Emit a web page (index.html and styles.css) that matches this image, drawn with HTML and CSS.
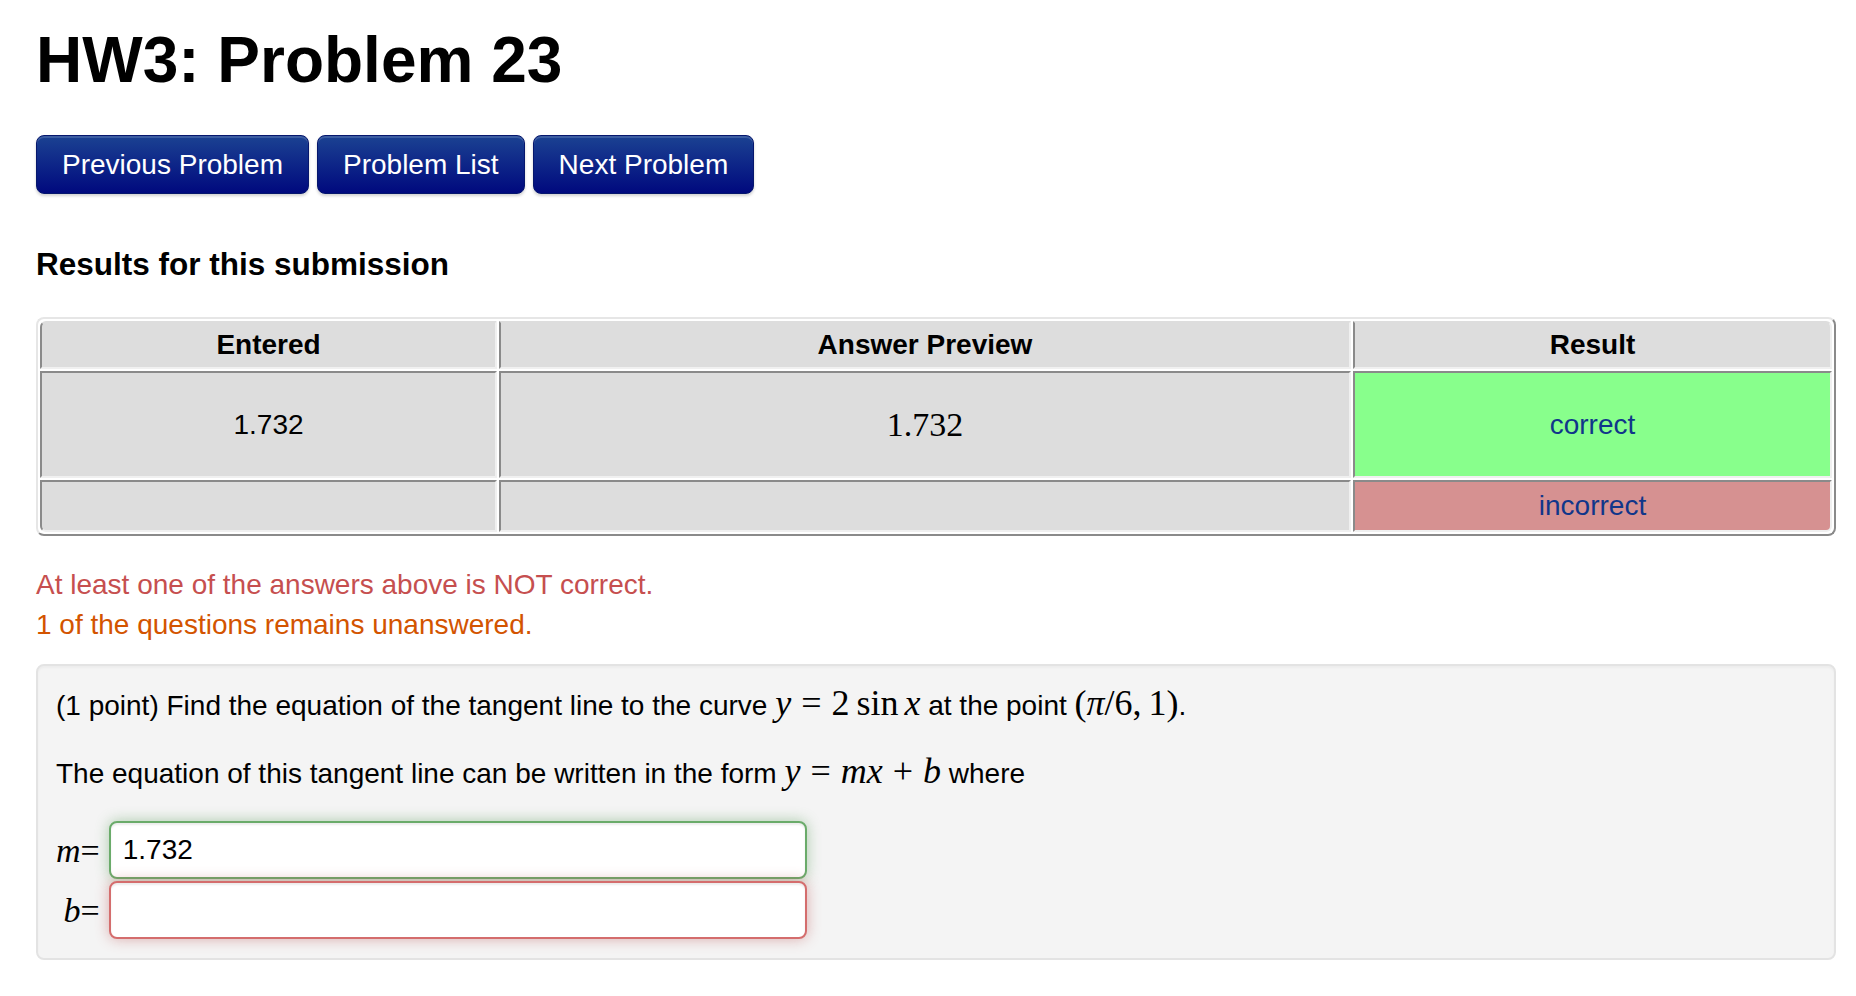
FILE: index.html
```html
<!DOCTYPE html>
<html lang="en">
<head>
<meta charset="utf-8">
<title>HW3: Problem 23</title>
<link rel="stylesheet" href="styles.css">
</head>
<body>
<div class="page">
  <h1 class="title">HW3: Problem 23</h1>
  <nav class="nav">
    <a class="btn" href="#">Previous Problem</a>
    <a class="btn" href="#">Problem List</a>
    <a class="btn" href="#">Next Problem</a>
  </nav>
  <h2 class="subtitle">Results for this submission</h2>
  <table class="results">
    <colgroup><col class="c1"><col class="c2"><col class="c3"></colgroup>
    <tr class="head"><th>Entered</th><th>Answer Preview</th><th>Result</th></tr>
    <tr class="r1"><td>1.732</td><td class="preview">1.732</td><td class="ok">correct</td></tr>
    <tr class="r2"><td></td><td></td><td class="bad">incorrect</td></tr>
  </table>
  <div class="summary">
    <div class="msg-err">At least one of the answers above is NOT correct.</div>
    <div class="msg-warn">1 of the questions remains unanswered.</div>
  </div>
  <div class="problem">
    <p>(1 point) Find the equation of the tangent line to the curve <span class="math"><i>y</i><span class="op">=</span>2<span class="fn">sin</span><i>x</i></span> at the point <span class="math">(<i>π</i>/6,<span class="thin"></span>1)</span>.</p>
    <p>The equation of this tangent line can be written in the form <span class="math"><i>y</i><span class="op">=</span><i>mx</i><span class="op">+</span><i>b</i></span> where</p>
    <div class="answers">
      <label class="lbl" for="m"><span class="math"><i>m</i>=</span></label>
      <input class="ans good" id="m" type="text" value="1.732">
      <label class="lbl" for="b"><span class="math"><i>b</i>=</span></label>
      <input class="ans wrong" id="b" type="text" value="">
    </div>
  </div>
</div>
</body>
</html>
```

FILE: styles.css
```css
* { box-sizing: border-box; }
html, body { margin: 0; padding: 0; background: #fff; }
body {
  font-family: "Liberation Sans", Arial, Helvetica, sans-serif;
  font-size: 28px;
  line-height: 40px;
  color: #000;
}
.page {
  margin-left: 36px;
  width: 1800px;
}
.title {
  margin: 24px 0 0;
  font-size: 64px;
  line-height: 72px;
  font-weight: bold;
}
.nav {
  display: flex;
  gap: 8px;
  margin-top: 39px;
}
.btn {
  display: block;
  height: 59px;
  padding: 0 25px;
  border: 1px solid #06176d;
  border-radius: 8px;
  background: linear-gradient(#1b4292, #00097e);
  box-shadow: inset 0 2px 0 rgba(255,255,255,0.15), 0 2px 3px rgba(0,0,0,0.18);
  color: #fff;
  text-decoration: none;
  font-size: 28px;
  line-height: 57px;
  white-space: nowrap;
}
.subtitle {
  margin: 50px 0 0;
  font-size: 31.5px;
  line-height: 40px;
  font-weight: bold;
}
.results {
  margin-top: 33px;
  width: 1800px;
  table-layout: fixed;
  border-collapse: separate;
  border-spacing: 2px;
  border: 2px solid;
  border-color: #e6e6e6 #8a8a8a #8a8a8a #e6e6e6;
  border-radius: 8px;
}
.c1 { width: 457px; }
.c2 { width: 852px; }
.c3 { width: 479px; }
.results th, .results td {
  border: 2px solid;
  border-color: #8a8a8a #f0f0f0 #f0f0f0 #8a8a8a;
  background: #dddddd;
  text-align: center;
  vertical-align: middle;
  padding: 0 10px;
}
.results th {
  height: 48px;
  font-weight: bold;
  border-top-color: #dddddd;
}
.results th:first-child { border-top-left-radius: 6px; }
.results th:last-child { border-top-right-radius: 6px; }
.results .r2 td:first-child { border-bottom-left-radius: 6px; }
.results .r2 td:last-child { border-bottom-right-radius: 6px; }
.results .r1 td { height: 107px; }
.results .r2 td { height: 52px; }
.results .preview {
  font-family: "Liberation Serif", "DejaVu Serif", serif;
  font-size: 34px;
}
.results td.ok { background: #88ff8c; color: #10368a; }
.results td.bad { background: #d69191; color: #10368a; }
.summary { margin-top: 29px; }
.msg-err { color: #c64f4f; }
.msg-warn { color: #d35400; }
.problem {
  margin-top: 19px;
  background: #f4f4f4;
  border: 2px solid #e3e3e3;
  border-radius: 8px;
  padding: 19px 18px 19px;
  box-shadow: inset 0 2px 2px rgba(0,0,0,0.03);
}
.problem p { margin: 0 0 27px; }
.math {
  font-family: "Liberation Serif", "DejaVu Serif", serif;
  font-size: 36px;
  line-height: 1;
  white-space: nowrap;
}
.math i { font-style: italic; }
.math .op { margin: 0 10px; }
.math .fn { margin: 0 6px 0 7px; }
.math .thin { display: inline-block; width: 7px; }
.answers {
  margin-top: 3px;
  display: grid;
  grid-template-columns: max-content 698px;
  column-gap: 9px;
  row-gap: 2px;
  align-items: center;
}
.lbl {
  text-align: right;
  padding-top: 6px;
}
.lbl .math { font-size: 34px; }
.ans {
  display: block;
  width: 698px;
  height: 58px;
  margin: 0;
  padding: 0 12px;
  border: 2px solid;
  border-radius: 8px;
  background: #fff;
  font-family: "Liberation Sans", Arial, Helvetica, sans-serif;
  font-size: 28px;
  color: #000;
  outline: none;
}
.ans.good {
  border-color: #6aab6a;
  box-shadow: inset 0 2px 2px rgba(0,0,0,0.075), 0 0 14px rgba(81,153,81,0.45);
}
.ans.wrong {
  border-color: #d46d6d;
  box-shadow: inset 0 2px 2px rgba(0,0,0,0.075), 0 0 14px rgba(191,84,84,0.45);
}
```
